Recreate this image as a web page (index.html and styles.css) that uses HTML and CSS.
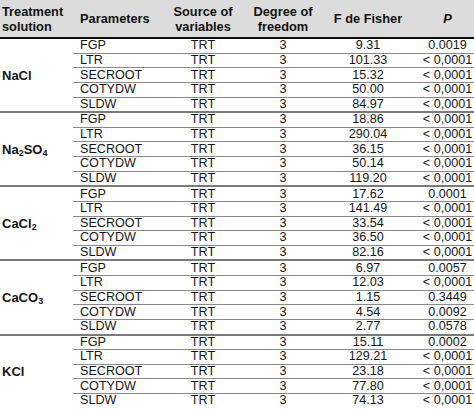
FILE: index.html
```html
<!DOCTYPE html>
<html>
<head>
<meta charset="utf-8">
<link rel="stylesheet" href="styles.css">
</head>
<body>
<table class="anova">
  <colgroup>
    <col class="c1"><col class="c2"><col class="c3"><col class="c4"><col class="c5"><col class="c6">
  </colgroup>
  <thead>
    <tr>
      <th class="lft">Treatment<br>solution</th>
      <th class="lft par">Parameters</th>
      <th>Source of<br>variables</th>
      <th>Degree of<br>freedom</th>
      <th>F de Fisher</th>
      <th class="pcol"><i>P</i></th>
    </tr>
  </thead>
  <tbody class="grp">
    <tr><td class="sol" rowspan="5">NaCl</td><td class="par">FGP</td><td>TRT</td><td>3</td><td>9.31</td><td class="pcol">0.0019</td></tr>
    <tr><td class="par">LTR</td><td>TRT</td><td>3</td><td>101.33</td><td class="pcol">&lt; 0,0001</td></tr>
    <tr><td class="par">SECROOT</td><td>TRT</td><td>3</td><td>15.32</td><td class="pcol">&lt; 0,0001</td></tr>
    <tr><td class="par">COTYDW</td><td>TRT</td><td>3</td><td>50.00</td><td class="pcol">&lt; 0,0001</td></tr>
    <tr class="last"><td class="par">SLDW</td><td>TRT</td><td>3</td><td>84.97</td><td class="pcol">&lt; 0,0001</td></tr>
  </tbody>
  <tbody class="grp">
    <tr><td class="sol" rowspan="5">Na<sub>2</sub>SO<sub>4</sub></td><td class="par">FGP</td><td>TRT</td><td>3</td><td>18.86</td><td class="pcol">&lt; 0,0001</td></tr>
    <tr><td class="par">LTR</td><td>TRT</td><td>3</td><td>290.04</td><td class="pcol">&lt; 0,0001</td></tr>
    <tr><td class="par">SECROOT</td><td>TRT</td><td>3</td><td>36.15</td><td class="pcol">&lt; 0,0001</td></tr>
    <tr><td class="par">COTYDW</td><td>TRT</td><td>3</td><td>50.14</td><td class="pcol">&lt; 0,0001</td></tr>
    <tr class="last"><td class="par">SLDW</td><td>TRT</td><td>3</td><td>119.20</td><td class="pcol">&lt; 0,0001</td></tr>
  </tbody>
  <tbody class="grp">
    <tr><td class="sol" rowspan="5">CaCl<sub>2</sub></td><td class="par">FGP</td><td>TRT</td><td>3</td><td>17.62</td><td class="pcol">0.0001</td></tr>
    <tr><td class="par">LTR</td><td>TRT</td><td>3</td><td>141.49</td><td class="pcol">&lt; 0,0001</td></tr>
    <tr><td class="par">SECROOT</td><td>TRT</td><td>3</td><td>33.54</td><td class="pcol">&lt; 0,0001</td></tr>
    <tr><td class="par">COTYDW</td><td>TRT</td><td>3</td><td>36.50</td><td class="pcol">&lt; 0,0001</td></tr>
    <tr class="last"><td class="par">SLDW</td><td>TRT</td><td>3</td><td>82.16</td><td class="pcol">&lt; 0,0001</td></tr>
  </tbody>
  <tbody class="grp">
    <tr><td class="sol" rowspan="5">CaCO<sub>3</sub></td><td class="par">FGP</td><td>TRT</td><td>3</td><td>6.97</td><td class="pcol">0.0057</td></tr>
    <tr><td class="par">LTR</td><td>TRT</td><td>3</td><td>12.03</td><td class="pcol">&lt; 0,0001</td></tr>
    <tr><td class="par">SECROOT</td><td>TRT</td><td>3</td><td>1.15</td><td class="pcol">0.3449</td></tr>
    <tr><td class="par">COTYDW</td><td>TRT</td><td>3</td><td>4.54</td><td class="pcol">0.0092</td></tr>
    <tr class="last"><td class="par">SLDW</td><td>TRT</td><td>3</td><td>2.77</td><td class="pcol">0.0578</td></tr>
  </tbody>
  <tbody class="grp final">
    <tr><td class="sol" rowspan="5">KCl</td><td class="par">FGP</td><td>TRT</td><td>3</td><td>15.11</td><td class="pcol">0.0002</td></tr>
    <tr><td class="par">LTR</td><td>TRT</td><td>3</td><td>129.21</td><td class="pcol">&lt; 0,0001</td></tr>
    <tr><td class="par">SECROOT</td><td>TRT</td><td>3</td><td>23.18</td><td class="pcol">&lt; 0,0001</td></tr>
    <tr><td class="par">COTYDW</td><td>TRT</td><td>3</td><td>77.80</td><td class="pcol">&lt; 0,0001</td></tr>
    <tr class="last"><td class="par">SLDW</td><td>TRT</td><td>3</td><td>74.13</td><td class="pcol">&lt; 0,0001</td></tr>
  </tbody>
</table>
</body>
</html>
```

FILE: styles.css
```css
html, body {
  margin: 0;
  padding: 0;
  background: #ffffff;
}

body {
  width: 474px;
  height: 409px;
  overflow: hidden;
  font-family: "Liberation Sans", Arial, sans-serif;
  color: #161616;
}

.anova {
  width: 474px;
  border-collapse: collapse;
  table-layout: fixed;
  font-size: 12.6px;
}

.c1 { width: 73px; }
.c2 { width: 92px; }
.c3 { width: 76px; }
.c4 { width: 84px; }
.c5 { width: 86px; }
.c6 { width: 63px; }

.anova th {
  background: #dcdcdc;
  font-weight: bold;
  font-size: 12.8px;
  line-height: 15px;
  height: 37px;
  padding: 0;
  text-align: center;
  vertical-align: middle;
  border-bottom: 2px solid #111111;
  color: #111111;
}

.anova th.lft {
  text-align: left;
  padding-left: 2px;
}

.anova th.par {
  padding-left: 7px;
}

.anova td {
  height: 13.64px;
  padding: 0;
  line-height: 13px;
  text-align: center;
  vertical-align: middle;
  border-bottom: 1px solid #8a8a8a;
  white-space: nowrap;
}

.anova td.par {
  text-align: left;
  padding-left: 7px;
}

.anova td.pcol,
.anova th.pcol {
  padding-left: 10px;
}

.anova td.sol {
  text-align: left;
  padding-left: 2px;
  font-weight: bold;
  font-size: 13px;
  border-bottom: 2px solid #7a7a7a;
}

.anova tr.last td {
  border-bottom: 2px solid #7a7a7a;
}

.anova tbody.final tr.last td,
.anova tbody.final td.sol {
  border-bottom: 2px solid transparent;
}

.anova sub {
  font-size: 9px;
  vertical-align: -2px;
  line-height: 0;
}
```
